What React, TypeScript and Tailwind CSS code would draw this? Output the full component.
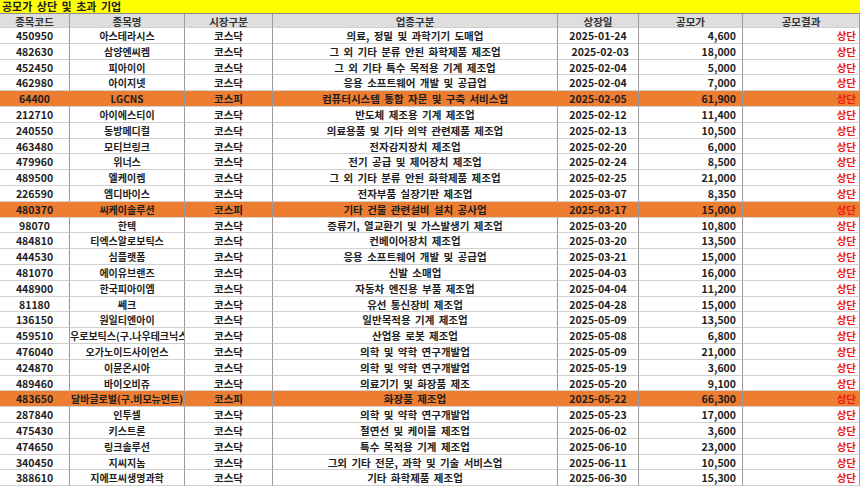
const rows: [string, string, string, string, string, string, boolean?][] = [
  ['450950', '아스테라시스', '코스닥', '의료, 정밀 및 과학기기 도매업', '2025-01-24', '4,600'],
  ['482630', '삼양엔씨켐', '코스닥', '그 외 기타 분류 안된 화학제품 제조업', ' 2025-02-03', '18,000'],
  ['452450', '피아이이', '코스닥', '그 외 기타 특수 목적용 기계 제조업', '2025-02-04', '5,000'],
  ['462980', '아이지넷', '코스닥', '응용 소프트웨어 개발 및 공급업', '2025-02-04', '7,000'],
  ['64400', 'LGCNS', '코스피', '컴퓨터시스템 통합 자문 및 구축 서비스업', '2025-02-05', '61,900', true],
  ['212710', '아이에스티이', '코스닥', '반도체 제조용 기계 제조업', '2025-02-12', '11,400'],
  ['240550', '동방메디컬', '코스닥', '의료용품 및 기타 의약 관련제품 제조업', '2025-02-13', '10,500'],
  ['463480', '모티브링크', '코스닥', '전자감지장치 제조업', '2025-02-20', '6,000'],
  ['479960', '위너스', '코스닥', '전기 공급 및 제어장치 제조업', '2025-02-24', '8,500'],
  ['489500', '엘케이켐', '코스닥', '그 외 기타 분류 안된 화학제품 제조업', '2025-02-25', '21,000'],
  ['226590', '엠디바이스', '코스닥', '전자부품 실장기판 제조업', '2025-03-07', '8,350'],
  ['480370', '씨케이솔루션', '코스피', '기타 건물 관련설비 설치 공사업', '2025-03-17', '15,000', true],
  ['98070', '한텍', '코스닥', '증류기, 열교환기 및 가스발생기 제조업', '2025-03-20', '10,800'],
  ['484810', '티엑스알로보틱스', '코스닥', '컨베이어장치 제조업', '2025-03-20', '13,500'],
  ['444530', '심플랫폼', '코스닥', '응용 소프트웨어 개발 및 공급업', '2025-03-21', '15,000'],
  ['481070', '에이유브랜즈', '코스닥', '신발 소매업', '2025-04-03', '16,000'],
  ['448900', '한국피아이엠', '코스닥', '자동차 엔진용 부품 제조업', '2025-04-04', '11,200'],
  ['81180', '쎄크', '코스닥', '유선 통신장비 제조업', '2025-04-28', '15,000'],
  ['136150', '원일티엔아이', '코스닥', '일반목적용 기계 제조업', '2025-05-09', '13,500'],
  ['459510', '우로보틱스(구.나우테크닉스)', '코스닥', '산업용 로봇 제조업', '2025-05-08', '6,800'],
  ['476040', '오가노이드사이언스', '코스닥', '의학 및 약학 연구개발업', '2025-05-09', '21,000'],
  ['424870', '이뮨온시아', '코스닥', '의학 및 약학 연구개발업', '2025-05-19', '3,600'],
  ['489460', '바이오비쥬', '코스닥', '의료기기 및 화장품 제조', '2025-05-20', '9,100'],
  ['483650', '달바글로벌(구.비모뉴먼트)', '코스피', '화장품 제조업', '2025-05-22', '66,300', true],
  ['287840', '인투셀', '코스닥', '의학 및 약학 연구개발업', '2025-05-23', '17,000'],
  ['475430', '키스트론', '코스닥', '절연선 및 케이블 제조업', '2025-06-02', '3,600'],
  ['474650', '링크솔루션', '코스닥', '특수 목적용 기계 제조업', '2025-06-10', '23,000'],
  ['340450', '지씨지놈', '코스닥', '그외 기타 전문, 과학 및 기술 서비스업', '2025-06-11', '10,500'],
  ['388610', '지에프씨생명과학', '코스닥', '기타 화학제품 제조업', '2025-06-30', '15,300'],
];

const headers = ['종목코드', '종목명', '시장구분', '업종구분', '상장일', '공모가', '공모결과'];

const cols = 'grid grid-cols-[70px_115px_88px_285px_81px_104px_1fr]';
const cell = 'border-r border-b border-r-[#9a9a9a] border-b-[#d0d0d0] whitespace-nowrap overflow-hidden leading-[15px]';

export default function App() {
  return (
    <div
      className="w-[860px] h-[487px] overflow-hidden bg-white text-[10.5px] font-bold text-[#1e1e1e] [word-spacing:2px]"
      style={{ fontFamily: '"Noto Sans CJK KR", "Noto Sans", sans-serif' }}
    >
      {/* Title */}
      <div className="h-[13px] bg-[#ffff00] pl-[2px] text-[11px] leading-[12px] text-[#222] whitespace-nowrap">
        공모가 상단 및 초과 기업
      </div>

      {/* Header */}
      <div className={`${cols} h-[15px] bg-[#dedede] text-[#333] border-t border-[#8a8a8a]`}>
        {headers.map((h) => (
          <div key={h} className={`${cell} border-b-[#9a9a9a] text-center leading-[13px]`}>
            {h}
          </div>
        ))}
      </div>

      {/* Rows */}
      {rows.map(([code, name, market, sector, date, price, hl]) => (
        <div key={code} className={`${cols} h-[15.8px] ${hl ? 'bg-[#ed7d31]' : ''}`}>
          <div className={`${cell} text-center`}>{code}</div>
          <div className={`${cell} text-center text-[10px]`}>{name}</div>
          <div className={`${cell} text-center`}>{market}</div>
          <div className={`${cell} text-center`}>{sector}</div>
          <div className={`${cell} text-center whitespace-pre`}>{date}</div>
          <div className={`${cell} text-right pr-[6px]`}>{price}</div>
          <div className={`${cell} text-right pr-[3px] text-[#f01818]`}>상단</div>
        </div>
      ))}
    </div>
  );
}
